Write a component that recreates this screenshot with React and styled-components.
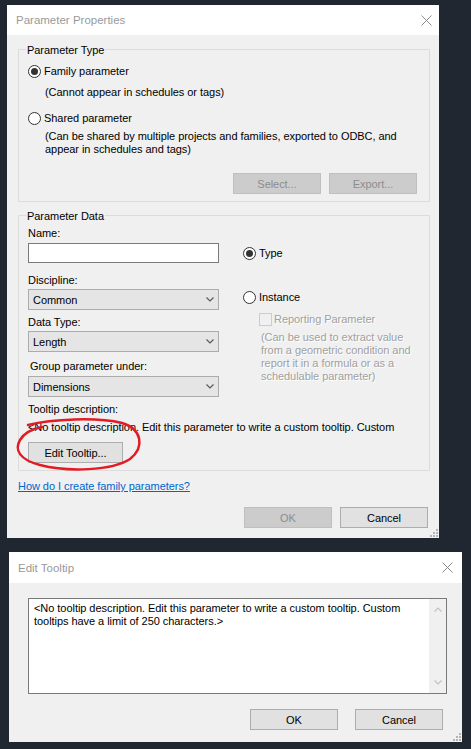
import React from "react";
import styled, { createGlobalStyle } from "styled-components";

const GlobalStyle = createGlobalStyle`
  html, body { margin: 0; padding: 0; background: #212730; }
  body {
    font-family: "Liberation Sans", Arial, sans-serif;
    font-size: 11px;
    letter-spacing: -0.05px;
    color: #000;
  }
  * { box-sizing: border-box; }
`;

const Page = styled.div`
  width: 471px;
  height: 749px;
  padding-top: 5px;
  display: flex;
  flex-direction: column;
  gap: 14px;
`;

const Window = styled.div`
  position: relative;
  margin-left: ${(p) => p.$left}px;
  width: ${(p) => p.$w}px;
  height: ${(p) => p.$h}px;
  background: #f0f0f0;
  display: flex;
  flex-direction: column;
`;

const TitleBar = styled.div`
  flex-shrink: 0;
  height: ${(p) => p.$h}px;
  background: #fff;
  display: flex;
  align-items: center;
  justify-content: space-between;
  padding: 0 ${(p) => p.$pr}px 0 9px;
`;

const Title = styled.span`
  color: #9a9a9a;
  font-size: 11.5px;
  letter-spacing: 0;
`;

const Body = styled.div`
  display: flex;
  flex-direction: column;
  padding: ${(p) => p.$pad};
`;

const Group = styled.section`
  margin-top: ${(p) => p.$mt}px;
  border: 1px solid #dcdcdc;
  display: flex;
  flex-direction: column;
  padding: 0 12px ${(p) => p.$pb}px 9px;
`;

const GroupLabel = styled.div`
  align-self: flex-start;
  margin: -8px 0 0 -2px;
  padding: 0 1px;
  line-height: 16px;
  background: #f0f0f0;
`;

const Text = styled.div`
  line-height: 16px;
  margin-top: ${(p) => p.$mt || 0}px;
  padding-left: ${(p) => p.$pl || 0}px;
  white-space: nowrap;
`;

const Note = styled.div`
  line-height: 13px;
  margin-top: ${(p) => p.$mt || 0}px;
  padding-left: ${(p) => p.$pl || 0}px;
  color: ${(p) => (p.$disabled ? "#a0a0a0" : "#000")};
  text-shadow: ${(p) => (p.$disabled ? "1px 1px 0 #fff" : "none")};
`;

const RadioRow = styled.div`
  display: flex;
  align-items: center;
  gap: 3px;
  height: 16px;
  margin-top: ${(p) => p.$mt || 0}px;
`;

const RadioCircle = styled.span`
  width: 13px;
  height: 13px;
  border-radius: 50%;
  border: 1px solid #333;
  background: #fff;
  display: flex;
  align-items: center;
  justify-content: center;
  &::after {
    content: "";
    width: 7px;
    height: 7px;
    border-radius: 50%;
    background: #333;
    display: ${(p) => (p.$checked ? "block" : "none")};
  }
`;

const CheckRow = styled.div`
  display: flex;
  align-items: center;
  gap: 2px;
  height: 16px;
  margin-top: ${(p) => p.$mt || 0}px;
  padding-left: ${(p) => p.$pl || 0}px;
  color: #a0a0a0;
  text-shadow: 1px 1px 0 #fff;
`;

const CheckBox = styled.span`
  width: 13px;
  height: 13px;
  border: 1px solid #cccccc;
  background: #f0f0f0;
`;

const ButtonRow = styled.div`
  display: flex;
  justify-content: flex-end;
  gap: ${(p) => p.$gap}px;
  margin-top: ${(p) => p.$mt}px;
  padding-right: ${(p) => p.$pr || 0}px;
`;

const Button = styled.div`
  width: ${(p) => p.$w || 88}px;
  height: 21px;
  display: flex;
  align-items: center;
  justify-content: center;
  background: ${(p) => (p.$disabled ? "#cccccc" : "#e1e1e1")};
  border: 1px solid ${(p) => (p.$disabled ? "#bfbfbf" : "#adadad")};
  color: ${(p) => (p.$disabled ? "#8c8c8c" : "#000")};
  margin-top: ${(p) => p.$mt || 0}px;
`;

const Columns = styled.div`
  display: flex;
  gap: 24px;
`;

const LeftCol = styled.div`
  width: 191px;
  display: flex;
  flex-direction: column;
`;

const RightCol = styled.div`
  display: flex;
  flex-direction: column;
`;

const Input = styled.div`
  height: 20px;
  margin-top: ${(p) => p.$mt}px;
  background: #fff;
  border: 1px solid #7a7a7a;
`;

const Combo = styled.div`
  height: 21px;
  margin-top: ${(p) => p.$mt}px;
  background: #e5e5e5;
  border: 1px solid #acacac;
  display: flex;
  align-items: center;
  justify-content: space-between;
  padding: 0 4px 0 4px;
`;

const TooltipArea = styled.div`
  position: relative;
  display: flex;
  flex-direction: column;
  margin-top: 2px;
`;

const Ellipse = styled.svg`
  position: absolute;
  left: -16px;
  top: -4px;
  overflow: visible;
  pointer-events: none;
`;

const HelpLink = styled.a`
  margin-top: 7px;
  line-height: 16px;
  color: #0066cc;
  text-decoration: underline;
  align-self: flex-start;
`;

const TextBox = styled.div`
  height: 96px;
  background: #fff;
  border: 1px solid #7a7a7a;
  display: flex;
`;

const TextBoxContent = styled.div`
  flex: 1;
  padding: 3px 5px;
  line-height: 13px;
  white-space: pre-wrap;
`;

const ScrollBar = styled.div`
  width: 17px;
  background: #f0f0f0;
  display: flex;
  flex-direction: column;
  justify-content: space-between;
  align-items: center;
  padding: 8px 0 8px;
`;

const Grip = styled.svg`
  position: absolute;
  right: 1px;
  bottom: 1px;
`;

const CloseX = () => (
  <svg width="11" height="11" viewBox="0 0 11 11">
    <path d="M0.5 0.5 L10.5 10.5 M10.5 0.5 L0.5 10.5" stroke="#8a8a8a" strokeWidth="1" />
  </svg>
);

const Chevron = ({ up, color = "#5a5a5a" }) => (
  <svg width="8" height="5" viewBox="0 0 8 5">
    <path
      d={up ? "M0.5 4.5 L4 1 L7.5 4.5" : "M0.5 0.5 L4 4 L7.5 0.5"}
      stroke={color}
      strokeWidth="1.2"
      fill="none"
    />
  </svg>
);

const GripIcon = () => (
  <Grip width="8" height="8" viewBox="0 0 8 8">
    {[
      [6, 0],
      [3, 3],
      [6, 3],
      [0, 6],
      [3, 6],
      [6, 6],
    ].map(([x, y]) => (
      <rect key={`${x}-${y}`} x={x} y={y} width="2" height="2" fill="#b4b4b4" />
    ))}
  </Grip>
);

const Radio = ({ checked, label, mt }) => (
  <RadioRow $mt={mt}>
    <RadioCircle $checked={checked} />
    <span>{label}</span>
  </RadioRow>
);

const Select = ({ value, mt }) => (
  <Combo $mt={mt}>
    <span>{value}</span>
    <Chevron />
  </Combo>
);

export default function App() {
  return (
    <>
      <GlobalStyle />
      <Page>
        <Window $left={7} $w={432} $h={533}>
          <TitleBar $h={30} $pr={7}>
            <Title>Parameter Properties</Title>
            <CloseX />
          </TitleBar>
          <Body $pad="14px 9px 0 11px">
            <Group $mt={0} $pb={7}>
              <GroupLabel>Parameter Type</GroupLabel>
              <Radio checked label="Family parameter" mt={5} />
              <Text $mt={5} $pl={17}>(Cannot appear in schedules or tags)</Text>
              <Radio label="Shared parameter" mt={10} />
              <Note $mt={4} $pl={17}>
                (Can be shared by multiple projects and families, exported to ODBC, and
                <br />
                appear in schedules and tags)
              </Note>
              <ButtonRow $gap={8} $mt={17}>
                <Button $disabled>Select...</Button>
                <Button $disabled>Export...</Button>
              </ButtonRow>
            </Group>

            <Group $mt={13} $pb={7}>
              <GroupLabel>Parameter Data</GroupLabel>
              <Columns>
                <LeftCol>
                  <Text $mt={1}>Name:</Text>
                  <Input $mt={2} />
                  <Text $mt={9}>Discipline:</Text>
                  <Select value="Common" mt={1} />
                  <Text $mt={4}>Data Type:</Text>
                  <Select value="Length" mt={1} />
                  <Text $mt={6} $pl={2}>Group parameter under:</Text>
                  <Select value="Dimensions" mt={2} />
                  <Text $mt={4}>Tooltip description:</Text>
                </LeftCol>
                <RightCol>
                  <Radio checked label="Type" mt={21} />
                  <Radio label="Instance" mt={28} />
                  <CheckRow $mt={6} $pl={16}>
                    <CheckBox />
                    <span>Reporting Parameter</span>
                  </CheckRow>
                  <Note $mt={4} $pl={18} $disabled>
                    (Can be used to extract value
                    <br />
                    from a geometric condition and
                    <br />
                    report it in a formula or as a
                    <br />
                    schedulable parameter)
                  </Note>
                </RightCol>
              </Columns>
              <TooltipArea>
                <Text>&lt;No tooltip description. Edit this parameter to write a custom tooltip. Custom</Text>
                <Button $w={95} $mt={7}>Edit Tooltip...</Button>
                <Ellipse width="135" height="60" viewBox="0 0 135 60">
                  <path
                    d="M16 10 C40 4, 85 2, 110 8 C130 14, 133 32, 118 44 C100 56, 55 57, 28 50 C8 45, 2 35, 8 25 C12 18, 20 14, 30 12"
                    stroke="#e31b23"
                    strokeWidth="2.5"
                    fill="none"
                    strokeLinecap="round"
                  />
                </Ellipse>
              </TooltipArea>
            </Group>

            <HelpLink>How do I create family parameters?</HelpLink>
            <ButtonRow $gap={8} $mt={13} $pr={2}>
              <Button $disabled>OK</Button>
              <Button>Cancel</Button>
            </ButtonRow>
          </Body>
          <GripIcon />
        </Window>

        <Window $left={9} $w={453} $h={190}>
          <TitleBar $h={31} $pr={9}>
            <Title>Edit Tooltip</Title>
            <CloseX />
          </TitleBar>
          <Body $pad="15px 15px 0 19px">
            <TextBox>
              <TextBoxContent>
                {"<No tooltip description. Edit this parameter to write a custom tooltip. Custom\ntooltips have a limit of 250 characters.>"}
              </TextBoxContent>
              <ScrollBar>
                <Chevron up color="#c2c2c2" />
                <Chevron color="#c2c2c2" />
              </ScrollBar>
            </TextBox>
            <ButtonRow $gap={17} $mt={15} $pr={4}>
              <Button>OK</Button>
              <Button>Cancel</Button>
            </ButtonRow>
          </Body>
          <GripIcon />
        </Window>
      </Page>
    </>
  );
}
